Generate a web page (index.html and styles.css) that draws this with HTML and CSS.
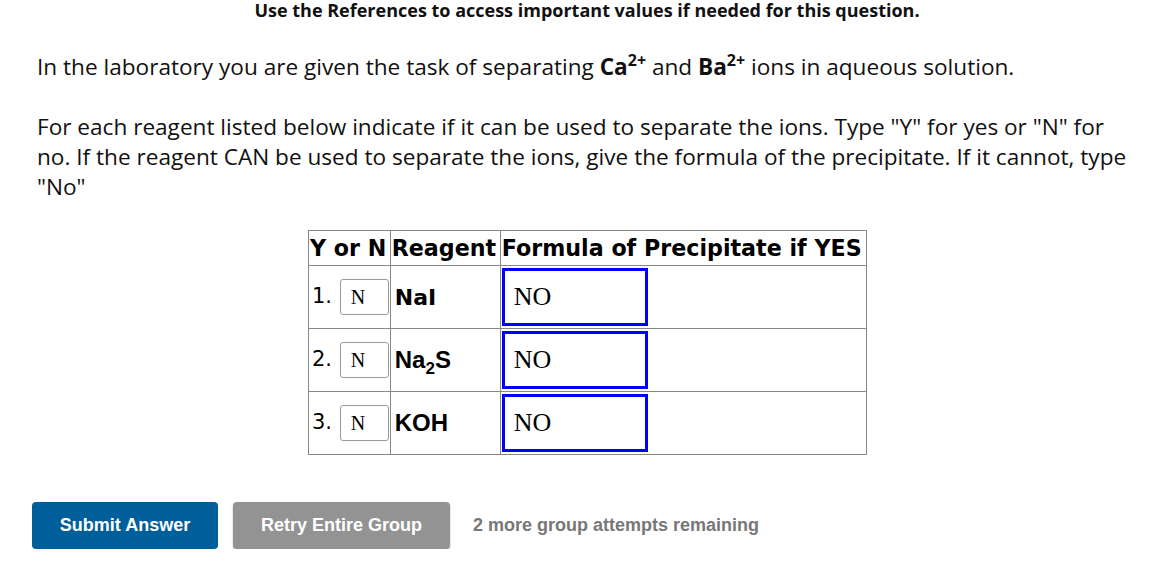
FILE: index.html
```html
<!DOCTYPE html>
<html lang="en">
<head>
  <meta charset="UTF-8">
  <title>Separating Ca and Ba ions</title>
  <link rel="stylesheet" href="styles.css">
</head>
<body>
  <div class="refs">Use the References to access important values if needed for this question.</div>

  <div class="question">
    <p class="intro">In the laboratory you are given the task of separating <b>Ca<sup>2+</sup></b> and <b>Ba<sup>2+</sup></b> ions in aqueous solution.</p>
    <p class="task">For each reagent listed below indicate if it can be used to separate the ions. Type "Y" for yes or "N" for no. If the reagent CAN be used to separate the ions, give the formula of the precipitate. If it cannot, type "No"</p>

    <table class="reagents">
      <tr>
        <th>Y or N</th>
        <th>Reagent</th>
        <th class="formula-head">Formula of Precipitate if YES</th>
      </tr>
      <tr>
        <td class="yn">1. <span class="yn-box">N</span></td>
        <td class="reagent verdana">NaI</td>
        <td><div class="answer">NO</div></td>
      </tr>
      <tr>
        <td class="yn">2. <span class="yn-box">N</span></td>
        <td class="reagent">Na<sub>2</sub>S</td>
        <td><div class="answer">NO</div></td>
      </tr>
      <tr>
        <td class="yn">3. <span class="yn-box">N</span></td>
        <td class="reagent">KOH</td>
        <td><div class="answer">NO</div></td>
      </tr>
    </table>
  </div>

  <div class="actions">
    <button class="btn submit">Submit Answer</button>
    <button class="btn retry">Retry Entire Group</button>
    <span class="attempts">2 more group attempts remaining</span>
  </div>
</body>
</html>
```

FILE: styles.css
```css
body {
  margin: 0;
  background-color: #ffffff;
  color: #000;
  font-family: 'Open Sans', sans-serif;
}
.refs {
  text-align: center;
  font-weight: bold;
  font-size: 18px;
  line-height: 20px;
  color: #111;
  padding-left: 6px;
}
.question {
  padding: 0 37px;
}
.intro {
  font-size: 22.6px;
  line-height: 30px;
  margin: 32px 0 0 0;
  color: #111;
}
.intro sup {
  font-size: 16px;
  line-height: 0;
  vertical-align: 9px;
}
.task {
  font-size: 22.6px;
  line-height: 30px;
  margin: 30px 0 0 0;
  color: #111;
}
.reagents {
  border-collapse: collapse;
  margin: 28px 0 0 271px;
  font-family: 'DejaVu Sans', Verdana, sans-serif;
}
.reagents th {
  border: 1px solid #888;
  font-size: 22.2px;
  font-weight: bold;
  padding: 0 1px;
  height: 34px;
  line-height: 32px;
  text-align: left;
  white-space: nowrap;
}
.reagents th.formula-head {
  padding-right: 4px;
}
.reagents td {
  border: 1px solid #888;
  height: 62px;
  padding: 0 1px;
  vertical-align: middle;
}
.reagents td.yn {
  white-space: nowrap;
  font-size: 21px;
  padding-left: 3px;
}
.yn-box {
  display: inline-block;
  width: 37px;
  height: 34px;
  border: 1px solid #999;
  border-radius: 3px;
  font-family: 'Liberation Serif', serif;
  font-size: 20px;
  line-height: 34px;
  padding-left: 10px;
  vertical-align: middle;
  margin-left: 1px;
}
.reagents td.reagent {
  font-family: 'Liberation Sans', Arial, sans-serif;
  font-weight: bold;
  font-size: 24px;
  padding-left: 4px;
  width: 104px;
}
.reagents td.verdana {
  font-family: 'DejaVu Sans', Verdana, sans-serif;
  font-size: 22px;
}
.reagent sub {
  font-size: 17px;
  line-height: 0;
}
.answer {
  width: 131px;
  height: 52px;
  border: 3px solid #0000ff;
  font-family: 'Liberation Serif', serif;
  font-size: 26px;
  line-height: 52px;
  padding-left: 9px;
}
.actions {
  display: flex;
  align-items: center;
  gap: 15px;
  margin: 47px 0 0 32px;
}
.btn {
  font-family: 'Liberation Sans', Arial, sans-serif;
  font-weight: bold;
  font-size: 18px;
  color: #fff;
  border: none;
  border-radius: 4px;
  height: 47px;
  cursor: pointer;
}
.submit {
  background-color: #005f9b;
  width: 186px;
}
.retry {
  background-color: #939393;
  width: 217px;
  box-shadow: 0 1px 2px rgba(0,0,0,0.3);
}
.attempts {
  font-family: 'Liberation Sans', Arial, sans-serif;
  font-weight: bold;
  font-size: 18px;
  color: #777;
  margin-left: 8px;
}
```
